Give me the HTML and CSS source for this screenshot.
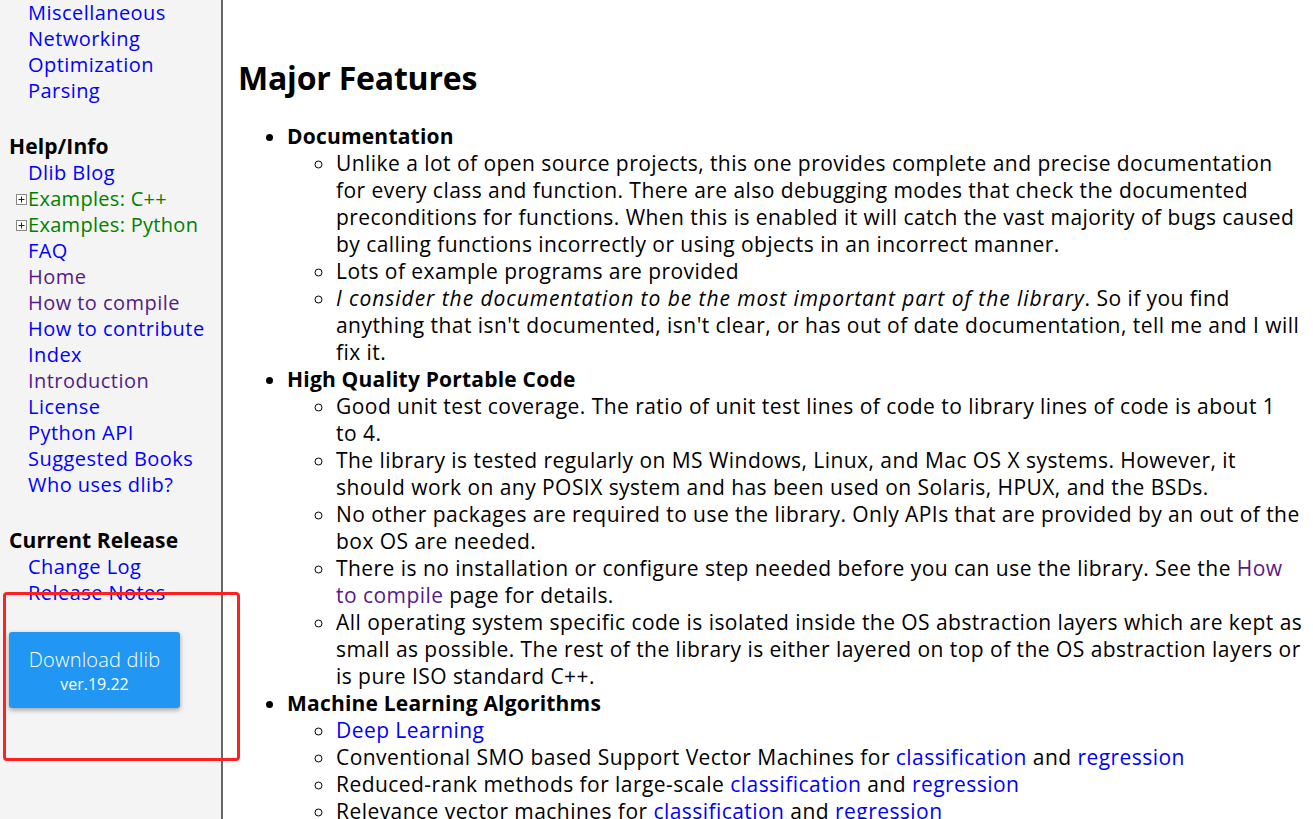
FILE: index.html
```html
<!DOCTYPE html>
<html>
<head>
<meta charset="utf-8">
<link rel="stylesheet" href="styles.css">
</head>
<body>
<div class="page">
  <nav class="sidebar">
    <div class="group">
      <a class="item" href="#">Miscellaneous</a>
      <a class="item" href="#">Networking</a>
      <a class="item" href="#">Optimization</a>
      <a class="item" href="#">Parsing</a>
    </div>
    <div class="group">
      <div class="head">Help/Info</div>
      <a class="item" href="#">Dlib Blog</a>
      <a class="item ex" href="#"><svg class="plus" width="11" height="11" viewBox="0 0 11 11"><rect x="0.5" y="0.5" width="10" height="10" fill="#fff" stroke="#888"/><path d="M2.5 5.5h6M5.5 2.5v6" stroke="#222" stroke-width="1"/></svg>Examples: C++</a>
      <a class="item ex" href="#"><svg class="plus" width="11" height="11" viewBox="0 0 11 11"><rect x="0.5" y="0.5" width="10" height="10" fill="#fff" stroke="#888"/><path d="M2.5 5.5h6M5.5 2.5v6" stroke="#222" stroke-width="1"/></svg>Examples: Python</a>
      <a class="item" href="#">FAQ</a>
      <a class="item visited" href="#">Home</a>
      <a class="item visited" href="#">How to compile</a>
      <a class="item" href="#">How to contribute</a>
      <a class="item" href="#">Index</a>
      <a class="item visited" href="#">Introduction</a>
      <a class="item" href="#">License</a>
      <a class="item" href="#">Python API</a>
      <a class="item" href="#">Suggested Books</a>
      <a class="item" href="#">Who uses dlib?</a>
    </div>
    <div class="group last">
      <div class="head">Current Release</div>
      <a class="item" href="#">Change Log</a>
      <a class="item" href="#">Release Notes</a>
    </div>
    <a class="download" href="#">
      <span class="dl-title">Download dlib</span>
      <span class="dl-ver">ver.19.22</span>
    </a>
  </nav>
  <main class="main">
    <h1>Major Features</h1>
    <ul class="features">
      <li><b>Documentation</b>
        <ul>
          <li>Unlike a lot of open source projects, this one provides complete and precise documentation for every class and function. There are also debugging modes that check the documented preconditions for functions. When this is enabled it will catch the vast majority of bugs caused by calling functions incorrectly or using objects in an incorrect manner.</li>
          <li>Lots of example programs are provided</li>
          <li><i>I consider the documentation to be the most important part of the library</i>. So if you find anything that isn't documented, isn't clear, or has out of date documentation, tell me and I will fix it.</li>
        </ul>
      </li>
      <li><b>High Quality Portable Code</b>
        <ul>
          <li>Good unit test coverage. The ratio of unit test lines of code to library lines of code is about 1 to&nbsp;4.</li>
          <li>The library is tested regularly on MS Windows, Linux, and Mac OS X systems. However, it should work on any POSIX system and has been used on Solaris, HPUX, and the BSDs.</li>
          <li>No other packages are required to use the library. Only APIs that are provided by an out of the box OS are needed.</li>
          <li>There is no installation or configure step needed before you can use the library. See the <a class="visited" href="#">How to compile</a> page for details.</li>
          <li>All operating system specific code is isolated inside the OS abstraction layers which are kept as small as possible. The rest of the library is either layered on top of the OS abstraction layers or is pure ISO standard C++.</li>
        </ul>
      </li>
      <li><b>Machine Learning Algorithms</b>
        <ul>
          <li><a href="#">Deep Learning</a></li>
          <li>Conventional SMO based Support Vector Machines for <a href="#">classification</a> and <a href="#">regression</a></li>
          <li>Reduced-rank methods for large-scale <a href="#">classification</a> and <a href="#">regression</a></li>
          <li>Relevance vector machines for <a href="#">classification</a> and <a href="#">regression</a></li>
          <li>General purpose multiclass classification tools</li>
        </ul>
      </li>
    </ul>
  </main>
  <div class="annotation"></div>
</div>
</body>
</html>
```

FILE: styles.css
```css
html, body {
  margin: 0;
  padding: 0;
  background: #fff;
  overflow: hidden;
}
body {
  font-family: "Open Sans", "Noto Sans", sans-serif;
  color: #000;
}
.page {
  position: relative;
  display: flex;
  height: 819px;
  overflow: hidden;
}
.sidebar {
  width: 221px;
  flex: none;
  background: #f4f4f4;
  border-right: 2px solid #666;
  display: flex;
  flex-direction: column;
  font-size: 20px;
  line-height: 26px;
  letter-spacing: 0.45px;
}
.group {
  display: flex;
  flex-direction: column;
  margin-bottom: 28px;
}
.group.last {
  margin-bottom: 26px;
}
.head {
  font-weight: bold;
  font-size: 21px;
  letter-spacing: 0.1px;
  padding-left: 9px;
  line-height: 28px;
}
.item {
  color: #0000ff;
  text-decoration: none;
  padding-left: 28px;
  white-space: nowrap;
}
.item.visited, a.visited {
  color: #551a8b;
}
.item.ex {
  color: #008000;
  padding-left: 16px;
  display: flex;
  align-items: center;
  letter-spacing: 0.3px;
}
.plus {
  margin-right: 1px;
  flex: none;
}
.download {
  margin: 0 0 0 9px;
  width: 171px;
  height: 76px;
  box-sizing: border-box;
  background: #2196f3;
  border-radius: 3px;
  box-shadow: 0 2px 5px rgba(0, 0, 0, 0.35);
  color: #fff;
  text-decoration: none;
  display: flex;
  flex-direction: column;
  align-items: center;
  justify-content: center;
  padding-top: 1px;
  letter-spacing: 0;
}
.dl-title {
  font-size: 20px;
  font-weight: 300;
  line-height: 26px;
  letter-spacing: 0.2px;
}
.dl-ver {
  font-size: 16px;
  line-height: 22px;
}
.main {
  flex: 1;
  padding: 58px 8px 0 15px;
  font-size: 21px;
  line-height: 27px;
  letter-spacing: 0.45px;
}
.main h1 {
  margin: 0 0 25px 0;
  font-size: 32px;
  line-height: 40px;
  font-weight: bold;
  letter-spacing: -0.2px;
}
.main b {
  letter-spacing: 0.2px;
}
.main i {
  letter-spacing: 0.95px;
}
.features, .features ul {
  margin: 0;
  padding-left: 49px;
}
.features > li {
  list-style: disc;
}
.features ul > li {
  list-style: circle;
}
.main a {
  color: #0000ff;
  text-decoration: none;
}
.main a.visited {
  color: #551a8b;
}
.annotation {
  position: absolute;
  left: 3px;
  top: 592px;
  width: 237px;
  height: 169px;
  box-sizing: border-box;
  border: 3px solid #ff2020;
  border-radius: 4px;
  pointer-events: none;
}
```
